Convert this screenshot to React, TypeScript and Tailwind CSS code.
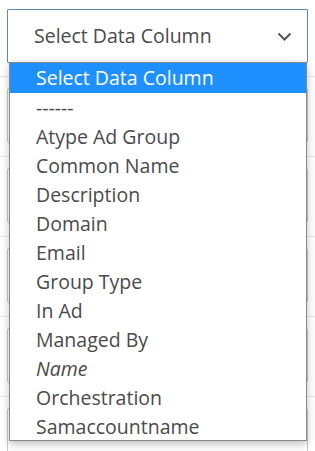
import React from "react";

const items = [
  "------",
  "Atype Ad Group",
  "Common Name",
  "Description",
  "Domain",
  "Email",
  "Group Type",
  "In Ad",
  "Managed By",
  "Name",
  "Orchestration",
  "Samaccountname",
];

export default function App() {
  return (
    <div className="relative w-[315px] h-[451px] overflow-hidden bg-white" style={{ fontFamily: "'Open Sans', Lato, sans-serif" }}>
      <div className="pt-[9px] px-[7px]">
        <div className="h-[54px] border border-[#5a8db5] rounded-[1px] flex items-center justify-between pl-[26px] pr-[15px] text-[#4a4a4a] text-[19.5px]">
          <span>Select Data Column</span>
          <svg width="15" height="9" viewBox="0 0 15 9" fill="none">
            <path d="M1.5 1.5 L7.5 7.5 L13.5 1.5" stroke="#555" strokeWidth="2" />
          </svg>
        </div>
      </div>
      {/* background rows */}
      <div className="mt-[13px] flex flex-col">
        {[0, 1, 2, 3, 4].map((i) => (
          <div key={i} className="h-[80px] border-t border-[#e6e6e6] px-[7px] pt-[11px]">
            <div className="h-[55px] border border-[#c9c9c9] rounded-[2px]" />
          </div>
        ))}
      </div>
      <div className="absolute left-[9px] top-[62px] w-[298px] h-[379px] bg-white border border-[#8a8a8a] shadow-[0_3px_8px_rgba(0,0,0,0.25)] text-[19.5px] text-[#4a4a4a]">
        <div className="h-[30px] bg-[#1e90ff] text-white pl-[26px] flex items-center">Select Data Column</div>
        {items.map((t) => (
          <div key={t} className={`h-[29px] pl-[26px] flex items-center ${t === "Name" ? "italic" : ""}`}>
            {t}
          </div>
        ))}
      </div>
    </div>
  );
}
